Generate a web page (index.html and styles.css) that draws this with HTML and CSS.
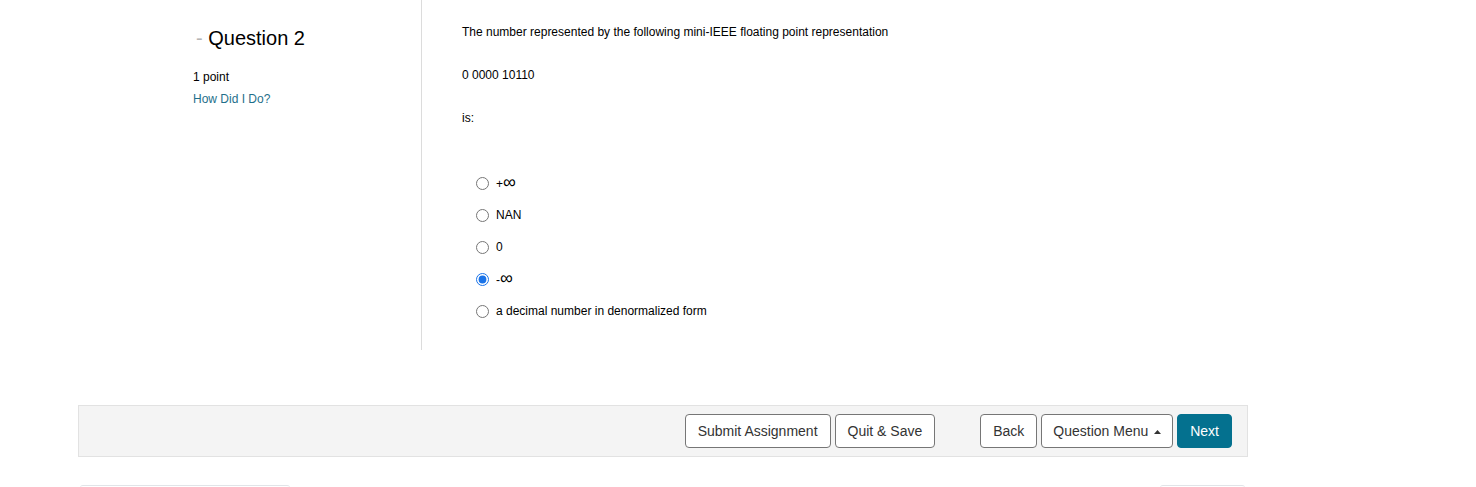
FILE: index.html
```html
<!DOCTYPE html>
<html lang="en">
<head>
    <meta charset="UTF-8">
    <meta name="viewport" content="width=device-width, initial-scale=1.0">
    <title>Question 2</title>
    <link rel="stylesheet" href="styles.css">
</head>
<body>
    <div class="question">
        <div class="question-info">
            <h2><span class="toggle">-</span> Question 2</h2>
            <div class="points">1 point</div>
            <a class="how-did" href="#">How Did I Do?</a>
        </div>

        <div class="question-body">
            <p>The number represented by the following mini-IEEE floating point representation</p>
            <p>0 0000 10110</p>
            <p>is:</p>

            <div class="choices">
                <label class="choice"><input type="radio" name="q2"><span>+<span class="inf">∞</span></span></label>
                <label class="choice"><input type="radio" name="q2"><span>NAN</span></label>
                <label class="choice"><input type="radio" name="q2"><span>0</span></label>
                <label class="choice"><input type="radio" name="q2" checked><span>-<span class="inf">∞</span></span></label>
                <label class="choice"><input type="radio" name="q2"><span>a decimal number in denormalized form</span></label>
            </div>
        </div>
    </div>

    <div class="footer-bar">
        <button class="btn">Submit Assignment</button>
        <button class="btn">Quit &amp; Save</button>
        <button class="btn push">Back</button>
        <button class="btn menu">Question Menu
            <svg class="caret" width="7" height="4" viewBox="0 0 7 4"><path d="M0 4 L3.5 0 L7 4 Z" fill="#333"/></svg>
        </button>
        <button class="btn primary">Next</button>
    </div>

    <div class="below">
        <div class="stub left"></div>
        <div class="stub right"></div>
    </div>
</body>
</html>
```

FILE: styles.css
```css
body {
    margin: 0;
    font-family: "Liberation Sans", Arial, sans-serif;
    color: #000;
    background-color: #fff;
}
.question {
    display: flex;
    margin-left: 193px;
}
.question-info {
    width: 228px;
    padding-top: 26px;
}
.question-info h2 {
    margin: 0 0 19px;
    font-size: 20px;
    font-weight: normal;
    line-height: 24px;
}
.toggle {
    color: #b5b5b5;
    margin-left: 3px;
}
.points {
    font-size: 12px;
    line-height: 16px;
    margin-bottom: 4px;
}
.how-did {
    font-size: 12px;
    line-height: 16px;
    color: #1f6f8b;
    text-decoration: none;
}
.question-body {
    border-left: 1px solid #dcdcdc;
    padding: 24px 0 0 40px;
    height: 326px;
    font-size: 12px;
}
.question-body p {
    margin: 0 0 27px;
    line-height: 16px;
}
.choices {
    padding: 14px 0 0 14px;
}
.choice {
    display: flex;
    align-items: center;
    gap: 7px;
    height: 32px;
    font-size: 12px;
}
.choice input {
    width: 13px;
    height: 13px;
    margin: 0;
    accent-color: #1a73e8;
}
.inf {
    font-size: 18px;
    line-height: 12px;
    letter-spacing: -1px;
}
.footer-bar {
    display: flex;
    justify-content: flex-end;
    align-items: center;
    gap: 4px;
    margin: 55px 0 0 78px;
    width: 1153px;
    height: 50px;
    padding-right: 15px;
    background-color: #f4f4f4;
    border: 1px solid #e2e2e2;
}
.btn {
    height: 34px;
    padding: 0 12px;
    border: 1px solid #767676;
    border-radius: 4px;
    background-color: #fff;
    color: #333;
    font-family: "Liberation Sans", Arial, sans-serif;
    font-size: 14px;
    cursor: pointer;
}
.btn.push {
    margin-left: 41px;
}
.btn.menu {
    padding: 0 11px;
}
.caret {
    margin-left: 2px;
    vertical-align: 2px;
}
.btn.primary {
    background-color: #04718f;
    border-color: #04718f;
    color: #fff;
}
.below {
    display: flex;
    justify-content: space-between;
    width: 1165px;
    margin: 28px 0 0 80px;
}
.stub {
    height: 10px;
    border-top: 1px solid #e1e4e8;
    border-radius: 3px 3px 0 0;
}
.stub.left {
    width: 210px;
}
.stub.right {
    width: 85px;
}
```
